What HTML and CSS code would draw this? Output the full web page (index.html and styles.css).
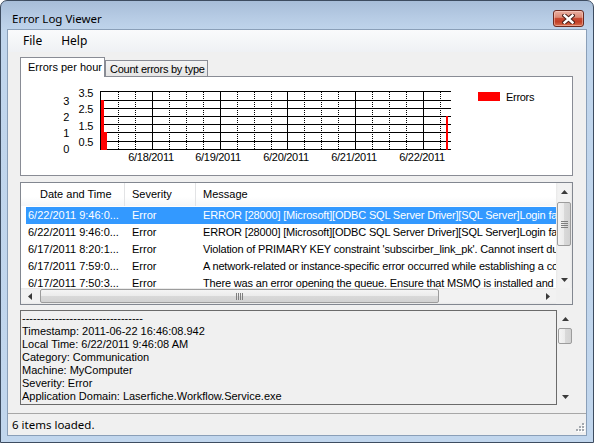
FILE: index.html
```html
<!DOCTYPE html>
<html>
<head>
<meta charset="utf-8">
<title>Error Log Viewer</title>
<link rel="stylesheet" href="styles.css">
</head>
<body>
<div class="window">
  <div class="titlebar">
    <span class="title">Error Log Viewer</span>
    <div class="close">
      <svg width="13" height="10" viewBox="0 0 13 10">
        <path d="M2.5 1.5L10.5 8.5M10.5 1.5L2.5 8.5" stroke="#4b2019" stroke-width="4.4" stroke-linecap="square" fill="none"/>
        <path d="M2.5 1.5L10.5 8.5M10.5 1.5L2.5 8.5" stroke="#ffffff" stroke-width="2.4" stroke-linecap="square" fill="none"/>
      </svg>
    </div>
  </div>
  <div class="client">
    <div class="menubar">
      <span class="menu-item">File</span>
      <span class="menu-item">Help</span>
    </div>
    <div class="content">
      <div class="tabs">
        <div class="tab active">Errors per hour</div>
        <div class="tab">Count errors by type</div>
      </div>
      <div class="tab-panel">
        <svg class="chart" width="551" height="98" viewBox="0 0 551 98">
          <path class="grid" d="M79 14.5H430M79 23.5H430M79 31.5H430M79 39.5H430M79 47.5H430M79 55.5H430M79 64.5H430M79 72.5H430"/>
          <path class="grid" d="M79.5 14V73M131.5 14V73M199.5 14V73M266.5 14V73M334.5 14V73M402.5 14V73"/>
          <path class="grid dotted" d="M97.5 15V72M114.5 15V72M148.5 15V72M165.5 15V72M182.5 15V72M216.5 15V72M233.5 15V72M250.5 15V72M283.5 15V72M300.5 15V72M317.5 15V72M351.5 15V72M368.5 15V72M385.5 15V72M419.5 15V72"/>
          <rect class="bar" x="80" y="23" width="3" height="50"/>
          <rect class="bar" x="83" y="55" width="3" height="18"/>
          <rect class="bar" x="425" y="39" width="2" height="34"/>
          <text class="lbl end" x="72" y="20">3.5</text>
          <text class="lbl end" x="72" y="36">2.5</text>
          <text class="lbl end" x="72" y="53">1.5</text>
          <text class="lbl end" x="72" y="69">0.5</text>
          <text class="lbl end" x="48" y="28">3</text>
          <text class="lbl end" x="48" y="44">2</text>
          <text class="lbl end" x="48" y="60">1</text>
          <text class="lbl end" x="48" y="76">0</text>
          <text class="lbl mid" x="130" y="84">6/18/2011</text>
          <text class="lbl mid" x="197" y="84">6/19/2011</text>
          <text class="lbl mid" x="265" y="84">6/20/2011</text>
          <text class="lbl mid" x="333" y="84">6/21/2011</text>
          <text class="lbl mid" x="401" y="84">6/22/2011</text>
          <rect class="bar" x="457" y="15" width="22" height="9"/>
          <text class="lbl" x="485" y="24">Errors</text>
        </svg>
      </div>

      <div class="listview">
        <div class="list-main">
          <div class="list-header">
            <div class="hcol h1">Date and Time</div>
            <div class="hcol h2">Severity</div>
            <div class="hcol h3">Message</div>
          </div>
          <div class="rows">
            <div class="row selected"><span class="c1">6/22/2011 9:46:0...</span><span class="c2">Error</span><span class="c3">ERROR [28000] [Microsoft][ODBC SQL Server Driver][SQL Server]Login failed for user</span></div>
            <div class="row"><span class="c1">6/22/2011 9:46:0...</span><span class="c2">Error</span><span class="c3">ERROR [28000] [Microsoft][ODBC SQL Server Driver][SQL Server]Login failed for user</span></div>
            <div class="row"><span class="c1">6/17/2011 8:20:1...</span><span class="c2">Error</span><span class="c3">Violation of PRIMARY KEY constraint 'subscirber_link_pk'. Cannot insert duplicate key</span></div>
            <div class="row"><span class="c1">6/17/2011 7:59:0...</span><span class="c2">Error</span><span class="c3">A network-related or instance-specific error occurred while establishing a connection</span></div>
            <div class="row"><span class="c1">6/17/2011 7:50:3...</span><span class="c2">Error</span><span class="c3">There was an error opening the queue. Ensure that MSMQ is installed and running</span></div>
          </div>
        </div>
        <div class="vscroll">
          <div class="sb-btn"><svg width="7" height="4" viewBox="0 0 7 4"><path class="arrow" d="M3.5 0L7 4H0Z"/></svg></div>
          <div class="sb-track">
            <div class="thumb-v list-thumb">
              <svg width="7" height="7" viewBox="0 0 7 7"><path class="grip" d="M0 0.5H7M0 2.5H7M0 4.5H7M0 6.5H7"/></svg>
            </div>
          </div>
          <div class="sb-btn"><svg width="7" height="4" viewBox="0 0 7 4"><path class="arrow" d="M0 0H7L3.5 4Z"/></svg></div>
        </div>
        <div class="hscroll">
          <div class="sb-btn-h"><svg width="4" height="7" viewBox="0 0 4 7"><path class="arrow" d="M0 3.5L4 0V7Z"/></svg></div>
          <div class="sb-track-h">
            <div class="thumb-h">
              <svg width="7" height="7" viewBox="0 0 7 7"><path class="grip" d="M0.5 0V7M2.5 0V7M4.5 0V7M6.5 0V7"/></svg>
            </div>
          </div>
          <div class="sb-btn-h"><svg width="4" height="7" viewBox="0 0 4 7"><path class="arrow" d="M0 0L4 3.5L0 7Z"/></svg></div>
        </div>
        <div class="corner"></div>
      </div>

      <div class="details">
        <div class="details-text">
          <div>---------------------------------</div>
          <div>Timestamp: 2011-06-22 16:46:08.942</div>
          <div>Local Time: 6/22/2011 9:46:08 AM</div>
          <div>Category: Communication</div>
          <div>Machine: MyComputer</div>
          <div>Severity: Error</div>
          <div>Application Domain: Laserfiche.Workflow.Service.exe</div>
        </div>
        <div class="vscroll details-scroll">
          <div class="sb-btn"><svg width="7" height="4" viewBox="0 0 7 4"><path class="arrow" d="M3.5 0L7 4H0Z"/></svg></div>
          <div class="sb-track">
            <div class="thumb-v small-thumb"></div>
          </div>
          <div class="sb-btn"><svg width="7" height="4" viewBox="0 0 7 4"><path class="arrow" d="M0 0H7L3.5 4Z"/></svg></div>
        </div>
      </div>
    </div>
    <div class="statusbar">
      <span class="status-text">6 items loaded.</span>
      <svg class="sizegrip" width="12" height="11" viewBox="0 0 12 11">
        <g class="grip-light">
          <rect x="10" y="2" width="2" height="2"/><rect x="7" y="5" width="2" height="2"/><rect x="10" y="5" width="2" height="2"/>
          <rect x="4" y="8" width="2" height="2"/><rect x="7" y="8" width="2" height="2"/><rect x="10" y="8" width="2" height="2"/>
        </g>
        <g class="grip-dark">
          <rect x="9" y="1" width="2" height="2"/><rect x="6" y="4" width="2" height="2"/><rect x="9" y="4" width="2" height="2"/>
          <rect x="3" y="7" width="2" height="2"/><rect x="6" y="7" width="2" height="2"/><rect x="9" y="7" width="2" height="2"/>
        </g>
      </svg>
    </div>
  </div>
</div>
</body>
</html>
```

FILE: styles.css
```css
* { box-sizing: border-box; }

body {
  margin: 0;
  background: #ffffff;
  font-family: "Liberation Sans", Arial, sans-serif;
  font-size: 11px;
  color: #000;
}

.window {
  width: 594px;
  height: 443px;
  border: 1px solid #3d4c60;
  border-radius: 7px 7px 0 0;
  background: linear-gradient(#a7bdd8 0px, #b6cbe4 16px, #c0d5ec 30px, #c1d6ed 100%);
  padding: 0 6px 6px;
  display: flex;
  flex-direction: column;
}

.titlebar {
  height: 28px;
  display: flex;
  align-items: flex-start;
  justify-content: space-between;
}

.title {
  font-family: "Noto Sans", "Open Sans", sans-serif;
  font-size: 11.5px;
  line-height: 14px;
  margin: 11px 0 0 5px;
  color: #000;
}

.close {
  width: 31px;
  height: 17px;
  margin: 9px 3px 0 0;
  border: 1px solid #6b2a20;
  border-radius: 3px;
  background: linear-gradient(#eab0a2 0%, #dc8a76 42%, #c84a32 50%, #c13f27 72%, #d9704f 100%);
  box-shadow: inset 0 0 0 1px rgba(255, 220, 210, 0.45);
  display: flex;
  align-items: center;
  justify-content: center;
}

.client {
  flex: 1;
  border: 1px solid #8a9fb8;
  background: #f0f0f0;
  display: flex;
  flex-direction: column;
}

.menubar {
  height: 22px;
  display: flex;
  gap: 19px;
  padding-left: 15px;
  background: linear-gradient(#fafbfc, #eff1f4);
  font-family: "Noto Sans", "Open Sans", sans-serif;
  font-size: 12px;
  line-height: 22px;
}

.content {
  padding: 5px 13px 0 12px;
  display: flex;
  flex-direction: column;
}

/* Tabs */
.tabs {
  height: 20px;
  display: flex;
  align-items: flex-end;
}

.tab {
  height: 17px;
  width: 103px;
  padding-left: 4px;
  border: 1px solid #898c95;
  border-bottom: none;
  background: linear-gradient(#f3f3f3, #e4e4e4);
  line-height: 16px;
  white-space: nowrap;
  letter-spacing: -0.25px;
}

.tab.active {
  position: relative;
  z-index: 1;
  height: 20px;
  width: 85px;
  padding-left: 7px;
  background: #fff;
  line-height: 18px;
  letter-spacing: 0;
}

.tab-panel {
  margin-top: -1px;
  height: 100px;
  border: 1px solid #898c95;
  background: #fff;
}

.chart { display: block; }
.grid { stroke: #000; stroke-width: 1; fill: none; }
.dotted { stroke-dasharray: 1 1; }
.bar { fill: #ff0000; }
.lbl {
  font-family: "Liberation Sans", Arial, sans-serif;
  font-size: 11px;
  fill: #000;
  letter-spacing: -0.3px;
}
.end { text-anchor: end; }
.mid { text-anchor: middle; }

/* List view */
.listview {
  margin-top: 6px;
  height: 123px;
  border: 1px solid #828790;
  background: #fff;
  display: grid;
  grid-template-columns: 535px 16px;
  grid-template-rows: 105px 16px;
}

.list-main {
  overflow: hidden;
}

.list-header {
  height: 23px;
  display: flex;
  line-height: 23px;
  background: linear-gradient(#ffffff 0%, #ffffff 60%, #f5f6f7 100%);
  white-space: nowrap;
}

.hcol { border-right: 1px solid #e2e3e5; }
.h1 { width: 104px; padding-left: 19px; }
.h2 { width: 71px; padding-left: 7px; }
.h3 { flex: 1; padding-left: 7px; border-right: none; }

.rows { padding-top: 1px; }

.row {
  height: 17px;
  line-height: 17px;
  margin-left: 5px;
  display: flex;
  white-space: nowrap;
}

.row.selected {
  background: #3399ff;
  color: #fff;
}

.c1 { width: 98px; padding-left: 2px; flex: none; }
.c2 { width: 72px; padding-left: 8px; flex: none; }
.c3 { padding-left: 7px; flex: none; letter-spacing: -0.17px; }

/* Scrollbars */
.vscroll {
  display: flex;
  flex-direction: column;
  background: linear-gradient(90deg, #e8e8e8 0, #f2f2f2 2px, #f2f2f2 14px, #e8e8e8 16px);
}

.sb-btn {
  height: 17px;
  display: flex;
  align-items: center;
  justify-content: center;
}

.sb-track {
  flex: 1;
  padding: 2px 1px 0;
}

.arrow { fill: #3a3a3a; }
.grip { stroke: #7e7e7e; stroke-width: 1; fill: none; }

.thumb-v {
  border: 1px solid #9c9c9c;
  border-radius: 2px;
  background: linear-gradient(90deg, #f4f4f4 0%, #ebebeb 50%, #d9d9d9 51%, #d2d2d2 100%);
  display: flex;
  align-items: center;
  justify-content: center;
}

.list-thumb { height: 44px; }

.hscroll {
  display: flex;
  background: linear-gradient(#e8e8e8 0, #f2f2f2 2px, #f2f2f2 14px, #e8e8e8 16px);
}

.sb-btn-h {
  width: 17px;
  display: flex;
  align-items: center;
  justify-content: center;
}

.sb-track-h {
  flex: 1;
  padding: 1px 0 1px 2px;
}

.thumb-h {
  width: 399px;
  height: 100%;
  border: 1px solid #9c9c9c;
  border-radius: 2px;
  background: linear-gradient(#f4f4f4 0%, #ebebeb 50%, #d9d9d9 51%, #d2d2d2 100%);
  display: flex;
  align-items: center;
  justify-content: center;
}

.corner { background: #f0f0f0; }

/* Details */
.details {
  margin-top: 5px;
  height: 95px;
  display: flex;
}

.details-text {
  width: 537px;
  border: 1px solid #6b6b6b;
  background: #f0f0f0;
  padding: 1px 1px;
  line-height: 13px;
  white-space: nowrap;
  overflow: hidden;
}

.details-scroll {
  width: 16px;
  background: #f0f0f0;
}

.details-scroll .sb-track { padding-top: 1px; }

.small-thumb { height: 16px; }

/* Status bar */
.statusbar {
  margin-top: auto;
  height: 22px;
  border-top: 1px solid #a7a7a7;
  display: flex;
  justify-content: space-between;
  align-items: flex-end;
  font-family: "Noto Sans", "Open Sans", sans-serif;
  font-size: 11.5px;
}

.status-text {
  align-self: center;
  padding-left: 4px;
  line-height: 20px;
}

.sizegrip {
  margin: 0 1px 2px 0;
}

.grip-light rect { fill: #ffffff; }
.grip-dark rect { fill: #a3a8ae; }
```
